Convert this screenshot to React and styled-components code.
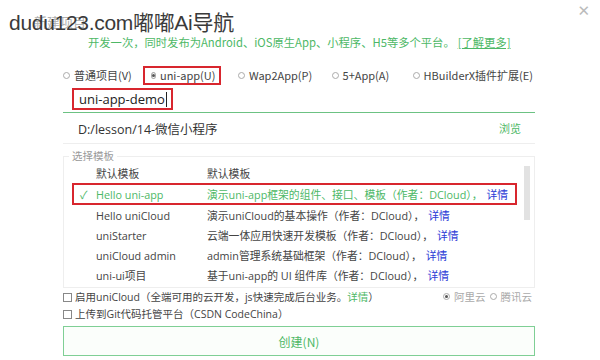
import React from 'react';
import styled, {createGlobalStyle} from 'styled-components';

const Global = createGlobalStyle`
  html, body {
    margin: 0;
    padding: 0;
    background: #fff;
  }
  body {
    font-family: "Open Sans", "Noto Sans CJK SC", sans-serif;
    color: #333;
  }
`;

const Dialog = styled.div`
  position: relative;
  width: 600px;
  height: 360px;
  overflow: hidden;
  background: #fff;
`;

const Watermark = styled.div`
  position: absolute;
  left: 9px;
  top: 6px;
  font-family: "Liberation Sans", "Noto Sans CJK SC", sans-serif;
  font-size: 21px;
  color: #3a3a3a;
  letter-spacing: -0.3px;
`;

const Header = styled.div`
  height: 34px;
  display: flex;
  align-items: center;
  justify-content: space-between;
  padding: 0 10px 0 34px;
`;

const Title = styled.div`
  font-size: 13px;
  color: #b0b0b0;
  font-family: "Noto Sans CJK SC", sans-serif;
  margin-top: 8px;
`;

const Close = styled.div`
  font-size: 15px;
  color: #bbb;
  font-family: "DejaVu Sans", sans-serif;
  margin-top: -12px;
`;

const Subtitle = styled.div`
  padding-left: 88px;
  font-size: 11.3px;
  line-height: 16px;
  color: #4db866;
  font-family: "Noto Sans CJK SC", sans-serif;
  white-space: nowrap;
`;

const MoreLink = styled.span`
  text-decoration: underline;
  margin-left: 3px;
`;

const Body = styled.div`
  margin: 14px 0 0 63px;
  width: 472px;
`;

const RadioRow = styled.div`
  display: flex;
  align-items: center;
  height: 22px;
  font-size: 11px;
  color: #444;
  font-family: "Noto Sans CJK SC", sans-serif;
`;

const RadioItem = styled.div`
  display: flex;
  align-items: center;
  gap: 4px;
  height: 19px;
  width: ${p => (p.$width ? `${p.$width}px` : 'auto')};
  margin-right: ${p => p.$gap || 0}px;
  padding: 0 ${p => (p.$boxed ? '6px' : '0')};
  border: 2px solid ${p => (p.$boxed ? '#d8262e' : 'transparent')};
  border-left-width: ${p => (p.$boxed ? 2 : 0)}px;
  box-sizing: border-box;
  white-space: nowrap;
`;

const RadioDot = styled.span`
  width: 7px;
  height: 7px;
  border-radius: 50%;
  border: 1px solid #aaa;
  box-sizing: border-box;
  display: inline-flex;
  align-items: center;
  justify-content: center;
  &::after {
    content: '';
    width: 3px;
    height: 3px;
    border-radius: 50%;
    background: ${p => (p.$on ? '#555' : 'transparent')};
  }
`;

const NameRow = styled.div`
  height: 27px;
  display: flex;
  align-items: center;
  border-bottom: 1px solid #6cc283;
  box-sizing: border-box;
`;

const NameBox = styled.div`
  margin-left: 9px;
  width: 101px;
  height: 22px;
  border: 2px solid #d8262e;
  box-sizing: border-box;
  display: flex;
  align-items: center;
  padding-left: 5px;
  font-size: 13px;
  color: #222;
`;

const Caret = styled.span`
  width: 1px;
  height: 15px;
  background: #222;
  margin-left: 1px;
`;

const PathRow = styled.div`
  height: 30px;
  display: flex;
  align-items: center;
  justify-content: space-between;
  padding: 0 14px 0 15px;
  border-bottom: 1px solid #eee;
  font-size: 12.5px;
  color: #333;
`;

const Browse = styled.span`
  font-size: 11px;
  color: #4db866;
  font-family: "Noto Sans CJK SC", sans-serif;
`;

const Group = styled.fieldset`
  margin: 5px 0 0;
  padding: 0 0 2px;
  border: 1px solid #eee;
  position: relative;
  box-sizing: border-box;
`;

const Legend = styled.legend`
  margin-left: 5px;
  padding: 0 3px;
  font-size: 10.5px;
  line-height: 14px;
  color: #999;
  font-family: "Noto Sans CJK SC", sans-serif;
`;

const Row = styled.div`
  display: grid;
  grid-template-columns: 22px 111px 1fr;
  align-items: center;
  height: ${p => (p.$selected ? 18 : 20)}px;
  margin: ${p => (p.$selected ? '0 17px 0 8px' : '0 17px 0 10px')};
  border: ${p => (p.$selected ? '2px solid #d8262e' : 'none')};
  font-size: 10.8px;
  color: ${p => (p.$selected ? '#4db866' : '#444')};
  white-space: nowrap;
`;

const Check = styled.span`
  color: #4db866;
  font-size: 11px;
  padding-left: 6px;
`;

const Detail = styled.span`
  color: #2b3bd6;
  margin-left: 4px;
`;

const Scroll = styled.div`
  position: absolute;
  right: 4px;
  top: 3px;
  width: 6px;
  height: 54px;
  background: #e2e2e2;
`;

const OptRow = styled.div`
  display: flex;
  align-items: center;
  justify-content: space-between;
  height: 17px;
  font-size: 10.5px;
  color: #444;
  white-space: nowrap;
  &:first-of-type {
    margin-top: 3px;
  }
`;

const Box = styled.span`
  display: inline-block;
  width: 7px;
  height: 7px;
  border: 1px solid #888;
  margin-right: 3px;
  vertical-align: -1px;
`;

const Green = styled.span`
  color: #4db866;
`;

const Clouds = styled.div`
  display: flex;
  align-items: center;
  gap: 4px;
  color: #aaa;
  padding-right: 3px;
`;

const Create = styled.div`
  margin-top: 4px;
  height: 30px;
  border: 1px solid #7fcf95;
  background: #fbfefb;
  display: flex;
  align-items: center;
  justify-content: center;
  font-size: 12px;
  color: #4db866;
  font-family: "Noto Sans CJK SC", sans-serif;
  box-sizing: border-box;
`;

const templates = [
    {name: 'Hello uniCloud', desc: '演示uniCloud的基本操作（作者：DCloud）'},
    {name: 'uniStarter', desc: '云端一体应用快速开发模板（作者：DCloud）'},
    {name: 'uniCloud admin', desc: 'admin管理系统基础框架（作者：DCloud）'},
    {name: 'uni-ui项目', desc: '基于uni-app的 UI 组件库（作者：DCloud）'},
];

const kinds = [
    {label: '普通项目(V)', width: 82},
    {label: 'uni-app(U)', width: 78, gap: 17, on: true},
    {label: 'Wap2App(P)', width: 96},
    {label: '5+App(A)', width: 83},
    {label: 'HBuilderX插件扩展(E)'},
];

const App = () => {
    return (
        <Dialog>
            <Global/>
            <Header>
                <Title>新建项目</Title>
                <Close>✕</Close>
            </Header>
            <Watermark>dudu123.com嘟嘟Ai导航</Watermark>
            <Subtitle>
                开发一次，同时发布为Android、iOS原生App、小程序、H5等多个平台。<MoreLink>[了解更多]</MoreLink>
            </Subtitle>
            <Body>
                <RadioRow>
                    {kinds.map(k =>
                        <RadioItem key={k.label} $width={k.width} $gap={k.gap} $boxed={k.on}>
                            <RadioDot $on={k.on}/>{k.label}
                        </RadioItem>
                    )}
                </RadioRow>
                <NameRow>
                    <NameBox>uni-app-demo<Caret/></NameBox>
                </NameRow>
                <PathRow>
                    <span>D:/lesson/14-微信小程序</span>
                    <Browse>浏览</Browse>
                </PathRow>
                <Group>
                    <Legend>选择模板</Legend>
                    <Scroll/>
                    <Row>
                        <span/>
                        <span>默认模板</span>
                        <span>默认模板</span>
                    </Row>
                    <Row $selected>
                        <Check>✓</Check>
                        <span>Hello uni-app</span>
                        <span>演示uni-app框架的组件、接口、模板（作者：DCloud），<Detail>详情</Detail></span>
                    </Row>
                    {templates.map(t =>
                        <Row key={t.name}>
                            <span/>
                            <span>{t.name}</span>
                            <span>{t.desc}，<Detail>详情</Detail></span>
                        </Row>
                    )}
                </Group>
                <OptRow>
                    <span><Box/>启用uniCloud（全端可用的云开发，js快速完成后台业务。<Green>详情</Green>）</span>
                    <Clouds>
                        <RadioDot $on/>阿里云
                        <RadioDot/>腾讯云
                    </Clouds>
                </OptRow>
                <OptRow>
                    <span><Box/>上传到Git代码托管平台（CSDN CodeChina）</span>
                </OptRow>
                <Create>创建(N)</Create>
            </Body>
        </Dialog>
    );
};

export default App;
